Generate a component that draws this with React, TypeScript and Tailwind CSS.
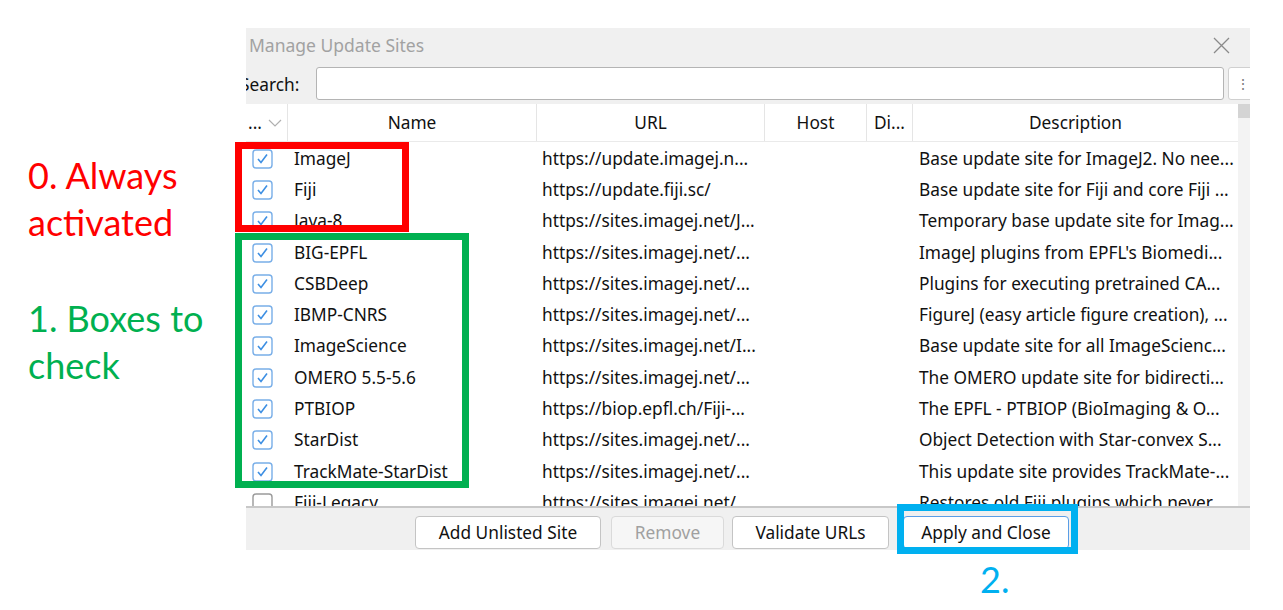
import React from "react"

type Site = { name: string; url: string; desc: string; on: boolean }

const sites: Site[] = [
  { name: "ImageJ", url: "https://update.imagej.n...", desc: "Base update site for ImageJ2. No nee...", on: true },
  { name: "Fiji", url: "https://update.fiji.sc/", desc: "Base update site for Fiji and core Fiji ...", on: true },
  { name: "Java-8", url: "https://sites.imagej.net/J...", desc: "Temporary base update site for Imag...", on: true },
  { name: "BIG-EPFL", url: "https://sites.imagej.net/...", desc: "ImageJ plugins from EPFL's Biomedi...", on: true },
  { name: "CSBDeep", url: "https://sites.imagej.net/...", desc: "Plugins for executing pretrained CA...", on: true },
  { name: "IBMP-CNRS", url: "https://sites.imagej.net/...", desc: "FigureJ (easy article figure creation), ...", on: true },
  { name: "ImageScience", url: "https://sites.imagej.net/I...", desc: "Base update site for all ImageScienc...", on: true },
  { name: "OMERO 5.5-5.6", url: "https://sites.imagej.net/...", desc: "The OMERO update site for bidirecti...", on: true },
  { name: "PTBIOP", url: "https://biop.epfl.ch/Fiji-...", desc: "The EPFL - PTBIOP (BioImaging & O...", on: true },
  { name: "StarDist", url: "https://sites.imagej.net/...", desc: "Object Detection with Star-convex S...", on: true },
  { name: "TrackMate-StarDist", url: "https://sites.imagej.net/...", desc: "This update site provides TrackMate-...", on: true },
  { name: "Fiji-Legacy", url: "https://sites.imagej.net/...", desc: "Restores old Fiji plugins which never ...", on: false },
]

const cols = "grid grid-cols-[42px_249px_228px_102px_46px_325px]"

function Check({ on }: { on: boolean }) {
  return (
    <svg width="21" height="20" viewBox="0 0 21 20">
      <rect x="1" y="1" width="19" height="18" rx="3" fill="white" stroke={on ? "#78aee8" : "#9a9a9a"} strokeWidth="1.4" />
      {on && <polyline points="6,10 9,13.5 15,5.5" fill="none" stroke="#3d8fe3" strokeWidth="1.6" />}
    </svg>
  )
}

export default function App() {
  return (
    <div className="relative w-[1283px] h-[610px] bg-white flex overflow-hidden font-['Noto_Sans',sans-serif]">
      {/* left annotations */}
      <div className="w-[246px] shrink-0 pl-[28px] pt-[152px] font-['Lato',sans-serif] text-[36px] leading-[47px]">
        <p className="text-[#ff0000]">0. Always<br />activated</p>
        <p className="text-[#00b050] mt-[49px]">1. Boxes to<br />check</p>
      </div>

      <div className="w-[1004px] shrink-0 flex flex-col">
        <div className="mt-[28px] h-[522px] bg-[#f0f0f0] flex flex-col overflow-hidden text-[17.3px] text-[#111]">
          {/* title bar */}
          <div className="h-[34px] shrink-0 flex items-center justify-between pl-[3px] pr-[20px]">
            <span className="text-[#a2a2a2] text-[17.5px]">Manage Update Sites</span>
            <svg width="17" height="17" viewBox="0 0 17 17">
              <path d="M1 1 L16 16 M16 1 L1 16" stroke="#8a8a8a" strokeWidth="1.3" />
            </svg>
          </div>

          {/* search row */}
          <div className="h-[42px] shrink-0 flex items-center">
            <span className="ml-[-6px] w-[76px] shrink-0 pt-[3px]">Search:</span>
            <div className="h-[33px] w-[908px] shrink-0 bg-white border border-[#b4b4b4] rounded-[3px]" />
            <div className="ml-[4px] h-[33px] w-[30px] shrink-0 bg-white border border-[#d0d0d0] rounded-[3px] flex items-center justify-center text-[#7a7a7a] text-[14px]">
              ⋮
            </div>
          </div>

          {/* table */}
          <div className="h-[402px] shrink-0 flex bg-white overflow-hidden">
            <div className="w-[992px] shrink-0 flex flex-col">
              <div className={`${cols} h-[38px] shrink-0 border-b border-[#eaeaea]`}>
                <div className="flex items-center pl-[2px] gap-[6px] border-r border-[#e5e5e5]">
                  <span>...</span>
                  <svg width="14" height="8" viewBox="0 0 14 8">
                    <path d="M1 1 L7 7 L13 1" fill="none" stroke="#b0b0b0" strokeWidth="1.2" />
                  </svg>
                </div>
                <div className="flex items-center justify-center border-r border-[#e5e5e5]">Name</div>
                <div className="flex items-center justify-center border-r border-[#e5e5e5]">URL</div>
                <div className="flex items-center justify-center border-r border-[#e5e5e5]">Host</div>
                <div className="flex items-center pl-[7px] border-r border-[#e5e5e5]">Di...</div>
                <div className="flex items-center justify-center">Description</div>
              </div>
              <div className="flex flex-col pt-[1px]">
                {sites.map((s) => (
                  <div key={s.name} className={`${cols} h-[31.3px] shrink-0 items-center whitespace-nowrap`}>
                    <div className="pl-[6px] flex items-center"><Check on={s.on} /></div>
                    <div className="pl-[6px] overflow-hidden">{s.name}</div>
                    <div className="pl-[5px] overflow-hidden">{s.url}</div>
                    <div />
                    <div />
                    <div className="pl-[6px] overflow-hidden">{s.desc}</div>
                  </div>
                ))}
              </div>
            </div>
            <div className="w-[12px] shrink-0 bg-[#f3f3f3] flex flex-col">
              <div className="h-[14px] bg-[#d4d4d4]" />
            </div>
          </div>

          {/* footer */}
          <div className="flex-1 border-t-2 border-[#c8c8c8] flex items-start pt-[8px] pl-[169px]">
            <button className="h-[33px] w-[186px] bg-white border border-[#c4c4c4] rounded-[4px]">Add Unlisted Site</button>
            <button className="ml-[10px] h-[33px] w-[113px] bg-[#f6f6f6] border border-[#dadada] rounded-[4px] text-[#a0a0a0]">Remove</button>
            <button className="ml-[8px] h-[33px] w-[157px] bg-white border border-[#c4c4c4] rounded-[4px]">Validate URLs</button>
            <button className="ml-[14px] h-[33px] w-[166px] bg-white border border-[#5a9ee6] rounded-[4px]">Apply and Close</button>
          </div>
        </div>
        <div className="pl-[734px] pt-[9px] font-['Lato',sans-serif] text-[36px] leading-[40px] text-[#00b0f0]">2.</div>
      </div>

      {/* highlight boxes */}
      <div className="absolute left-[235px] top-[142px] w-[174px] h-[90px] border-[7px] border-[#ff0000]" />
      <div className="absolute left-[235px] top-[233px] w-[234px] h-[255px] border-[7px] border-[#00b050]" />
      <div className="absolute left-[897px] top-[504px] w-[181px] h-[50px] border-[7px] border-[#00b0f0]" />
    </div>
  )
}
